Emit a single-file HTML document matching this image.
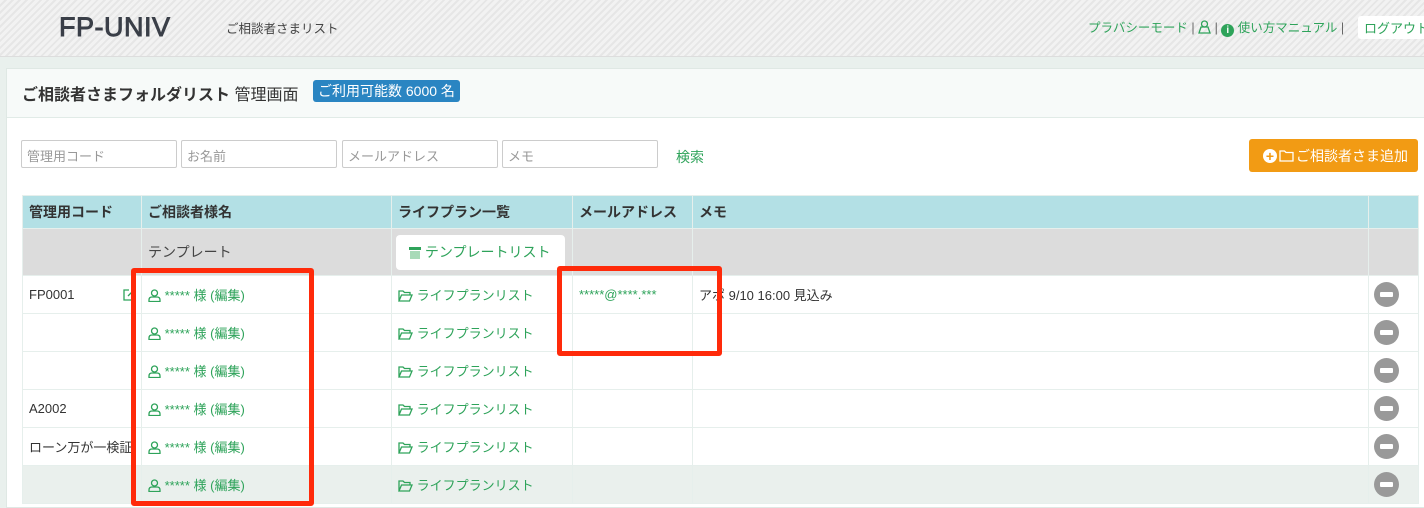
<!DOCTYPE html>
<html><head><meta charset="utf-8"><style>
*{box-sizing:border-box;margin:0;padding:0}
body{width:1424px;height:506px;overflow:hidden;font-family:"Liberation Sans","Noto Sans CJK JP",sans-serif;background:#e9f0ed;position:relative;color:#333}
.hdr{position:absolute;left:0;top:0;width:1424px;height:57px;background:repeating-linear-gradient(135deg,#f2f2f2 0 3px,#e6e6e6 3px 5px);border-bottom:1px solid #ddd}
.logo{position:absolute;left:59px;top:12px;font-size:27px;color:#3a3f48;letter-spacing:0.5px;-webkit-text-stroke:0.9px #3a3f48}
.sub{position:absolute;left:226px;top:18px;font-size:12.5px;color:#444}
.nav{position:absolute;top:17px;font-size:12.5px;color:#2ea35a;white-space:nowrap}
.sep{color:#666}
.logout{position:absolute;left:1358px;top:16px;background:#fff;padding:2px 6px;font-size:13px;color:#2ea35a;border-radius:3px;white-space:nowrap;width:70px;overflow:hidden}
.panel{position:absolute;left:6px;top:68px;width:1424px;height:440px;background:#fff;border:1px solid #dfe8e4}
.ph{height:49px;background:#f7faf9;border-bottom:1px solid #e1ebe7;position:relative}
.ph .t{position:absolute;left:15px;top:12px;font-size:16px;font-weight:bold;color:#333}
.ph .t span{font-weight:normal}
.badge{position:absolute;left:306px;top:11px;background:#2a85c2;color:#fff;font-size:14px;padding:1px 5px;border-radius:3px}
.in{position:absolute;top:140px;height:28px;width:156px;border:1px solid #ccc;border-radius:2px;font-size:13px;color:#999;padding:5px 5px;background:#fff}
.btn{position:absolute;left:1249px;top:139px;width:169px;height:33px;background:#f29b14;border-radius:3px;color:#fff;font-size:14px;display:flex;align-items:center;padding-left:14px;gap:2px;white-space:nowrap}
table{position:absolute;left:22px;top:195px;border-collapse:collapse;font-size:13px;table-layout:fixed}
td,th{border:1px solid #e6efec;padding:0 6px;text-align:left;white-space:nowrap;overflow:hidden}
th{background:#b3e0e5;height:33px;font-size:14px}
tr.tp td{background:#dcdcdc;height:47px}
tr.r td{height:38px;background:#fff}
tr.l td{background:#eaf0ed}
.g{color:#2ea35a}
.min{display:inline-block;width:25px;height:25px;border-radius:50%;background:#999;position:relative;vertical-align:middle;margin-left:-1px}
.min:after{content:"";position:absolute;left:6px;top:10px;width:13px;height:5px;background:#fff;border-radius:1px}
.red{position:absolute;border:5px solid #ff2a0a;border-radius:3px}
.tb{background:#fff;border-radius:4px;padding:7px 8px 8px 13px;display:inline-block;font-size:14px;width:169px;margin-left:-1px}
svg{vertical-align:-2px}
</style></head><body>
<div class="hdr">
<div class="logo">FP-UNIV</div>
<div class="sub">ご相談者さまリスト</div>
<div class="nav" style="left:1088px">プラバシーモード <span class="sep">|</span> <svg width="13" height="14" viewBox="0 0 13 14"><circle cx="6.5" cy="4" r="3" fill="none" stroke="#2ea35a" stroke-width="1.3"/><path d="M1 13 L3 7 H10 L12 13 Z" fill="none" stroke="#2ea35a" stroke-width="1.3"/></svg> <span class="sep">|</span> <span style="display:inline-block;width:13px;height:13px;border-radius:50%;background:#2ea35a;color:#fff;font-size:10px;text-align:center;line-height:13px;font-weight:bold;vertical-align:-1px">i</span> 使い方マニュアル <span class="sep">|</span></div>
<div class="logout">ログアウト</div>
</div>
<div class="panel"><div class="ph"><div class="t">ご相談者さまフォルダリスト <span>管理画面</span></div><div class="badge">ご利用可能数 6000 名</div></div></div>
<div class="in" style="left:21px">管理用コード</div>
<div class="in" style="left:181px">お名前</div>
<div class="in" style="left:342px">メールアドレス</div>
<div class="in" style="left:502px">メモ</div>
<div style="position:absolute;left:676px;top:147px;font-size:14px" class="g">検索</div>
<div class="btn"><span style="display:inline-block;width:14px;height:14px;border-radius:50%;background:#fff;color:#f29b14;font-size:14px;line-height:14px;text-align:center;font-weight:bold">+</span><svg width="15" height="13" viewBox="0 0 15 13"><path d="M1 2 H5.5 L7 3.5 H14 V12 H1 Z" fill="none" stroke="#fff" stroke-width="1.3"/></svg><span>ご相談者さま追加</span></div>
<table>
<colgroup><col style="width:119px"><col style="width:250px"><col style="width:181px"><col style="width:120px"><col style="width:676px"><col style="width:50px"></colgroup>
<tr><th>管理用コード</th><th>ご相談者様名</th><th>ライフプラン一覧</th><th>メールアドレス</th><th>メモ</th><th></th></tr>
<tr class="tp"><td></td><td style="font-size:14px;color:#444">テンプレート</td><td style="padding-left:5px"><span class="tb g"><svg width="12" height="12" viewBox="0 0 12 12"><rect x="0" y="0" width="12" height="3" fill="#2ea35a"/><rect x="1" y="4" width="10" height="8" fill="#a8dab8"/></svg> テンプレートリスト</span></td><td></td><td></td><td></td></tr>
<tr class="r"><td>FP0001 <span style="float:right"><svg width="12" height="12" viewBox="0 0 12 12"><path d="M6 1 H1 V11 H11 V6 M5 7 L11 1" fill="none" stroke="#2ea35a" stroke-width="1.3"/></svg></span></td><td class="g"><svg width="13" height="13" viewBox="0 0 13 13"><circle cx="6.5" cy="4" r="3" fill="none" stroke="#2ea35a" stroke-width="1.3"/><path d="M1 12.5 V11 Q1 8 4 8 H9 Q12 8 12 11 V12.5 Z" fill="none" stroke="#2ea35a" stroke-width="1.3"/></svg> ***** 様 (編集)</td><td class="g"><svg width="15" height="12" viewBox="0 0 15 12"><path d="M1 11 V1 H5 L6.5 2.5 H12 V5 M1 11 L3.5 5 H14 L11.5 11 Z" fill="none" stroke="#2ea35a" stroke-width="1.3"/></svg> ライフプランリスト</td><td class="g">*****@****.***</td><td>アポ 9/10 16:00 見込み</td><td><span class="min"></span></td></tr>
<tr class="r"><td></td><td class="g"><svg width="13" height="13" viewBox="0 0 13 13"><circle cx="6.5" cy="4" r="3" fill="none" stroke="#2ea35a" stroke-width="1.3"/><path d="M1 12.5 V11 Q1 8 4 8 H9 Q12 8 12 11 V12.5 Z" fill="none" stroke="#2ea35a" stroke-width="1.3"/></svg> ***** 様 (編集)</td><td class="g"><svg width="15" height="12" viewBox="0 0 15 12"><path d="M1 11 V1 H5 L6.5 2.5 H12 V5 M1 11 L3.5 5 H14 L11.5 11 Z" fill="none" stroke="#2ea35a" stroke-width="1.3"/></svg> ライフプランリスト</td><td></td><td></td><td><span class="min"></span></td></tr>
<tr class="r"><td></td><td class="g"><svg width="13" height="13" viewBox="0 0 13 13"><circle cx="6.5" cy="4" r="3" fill="none" stroke="#2ea35a" stroke-width="1.3"/><path d="M1 12.5 V11 Q1 8 4 8 H9 Q12 8 12 11 V12.5 Z" fill="none" stroke="#2ea35a" stroke-width="1.3"/></svg> ***** 様 (編集)</td><td class="g"><svg width="15" height="12" viewBox="0 0 15 12"><path d="M1 11 V1 H5 L6.5 2.5 H12 V5 M1 11 L3.5 5 H14 L11.5 11 Z" fill="none" stroke="#2ea35a" stroke-width="1.3"/></svg> ライフプランリスト</td><td></td><td></td><td><span class="min"></span></td></tr>
<tr class="r"><td>A2002</td><td class="g"><svg width="13" height="13" viewBox="0 0 13 13"><circle cx="6.5" cy="4" r="3" fill="none" stroke="#2ea35a" stroke-width="1.3"/><path d="M1 12.5 V11 Q1 8 4 8 H9 Q12 8 12 11 V12.5 Z" fill="none" stroke="#2ea35a" stroke-width="1.3"/></svg> ***** 様 (編集)</td><td class="g"><svg width="15" height="12" viewBox="0 0 15 12"><path d="M1 11 V1 H5 L6.5 2.5 H12 V5 M1 11 L3.5 5 H14 L11.5 11 Z" fill="none" stroke="#2ea35a" stroke-width="1.3"/></svg> ライフプランリスト</td><td></td><td></td><td><span class="min"></span></td></tr>
<tr class="r"><td>ローン万が一検証</td><td class="g"><svg width="13" height="13" viewBox="0 0 13 13"><circle cx="6.5" cy="4" r="3" fill="none" stroke="#2ea35a" stroke-width="1.3"/><path d="M1 12.5 V11 Q1 8 4 8 H9 Q12 8 12 11 V12.5 Z" fill="none" stroke="#2ea35a" stroke-width="1.3"/></svg> ***** 様 (編集)</td><td class="g"><svg width="15" height="12" viewBox="0 0 15 12"><path d="M1 11 V1 H5 L6.5 2.5 H12 V5 M1 11 L3.5 5 H14 L11.5 11 Z" fill="none" stroke="#2ea35a" stroke-width="1.3"/></svg> ライフプランリスト</td><td></td><td></td><td><span class="min"></span></td></tr>
<tr class="r l"><td></td><td class="g"><svg width="13" height="13" viewBox="0 0 13 13"><circle cx="6.5" cy="4" r="3" fill="none" stroke="#2ea35a" stroke-width="1.3"/><path d="M1 12.5 V11 Q1 8 4 8 H9 Q12 8 12 11 V12.5 Z" fill="none" stroke="#2ea35a" stroke-width="1.3"/></svg> ***** 様 (編集)</td><td class="g"><svg width="15" height="12" viewBox="0 0 15 12"><path d="M1 11 V1 H5 L6.5 2.5 H12 V5 M1 11 L3.5 5 H14 L11.5 11 Z" fill="none" stroke="#2ea35a" stroke-width="1.3"/></svg> ライフプランリスト</td><td></td><td></td><td><span class="min"></span></td></tr>
</table>
<div class="red" style="left:131px;top:268px;width:183px;height:238px"></div>
<div class="red" style="left:557px;top:266px;width:165px;height:90px"></div>
</body></html>
